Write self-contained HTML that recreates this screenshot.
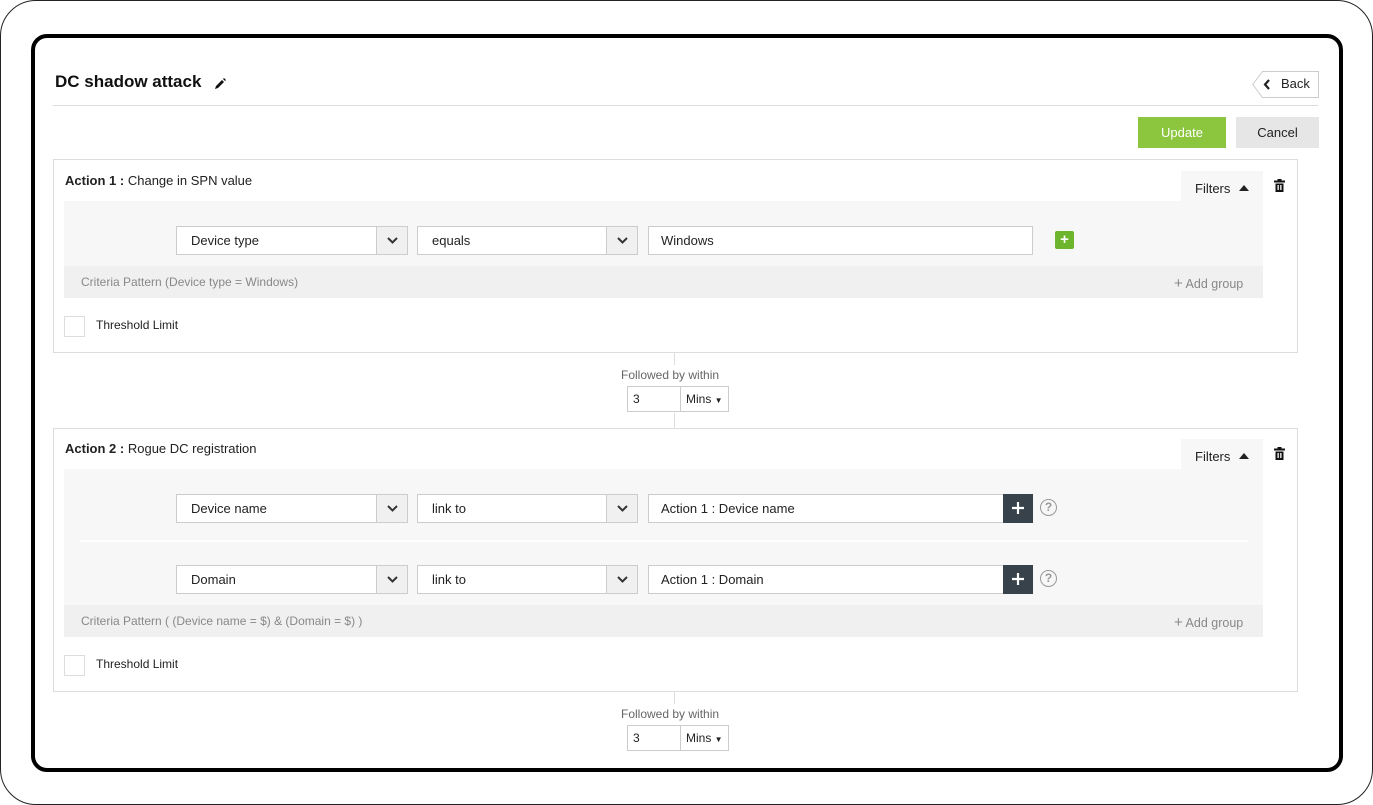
<!DOCTYPE html>
<html><head><style>
*{box-sizing:border-box;margin:0;padding:0}
body{width:1373px;height:805px;background:#fff;font-family:"Liberation Sans",sans-serif;color:#222;position:relative;overflow:hidden;font-size:13px}
.a{position:absolute}
.outer{left:0;top:0;width:1373px;height:805px;border:1px solid #222;border-radius:36px}
.inner{left:31px;top:34px;width:1312px;height:738px;border:4px solid #000;border-radius:16px}
.box{border:1px solid #ddd;background:#fff}
.sel{background:#fff;border:1px solid #ccc;height:29px;font-size:13px;line-height:27px;padding-left:14px;color:#222}
.sel .arr{position:absolute;right:0;top:0;width:31px;height:27px;background:#f0f0f0;border-left:1px solid #ccc}
.sel .arr svg{position:absolute;left:10px;top:10px}
.gray{background:#f7f7f7}
.crit{background:#f0f0f0;color:#888;font-size:12px}
.cb{width:21px;height:21px;border:1px solid #ddd;background:#fff}
.plusd{background:#37424a;width:30px;height:29px;color:#fff}
.help{width:17px;height:17px;border:1.5px solid #999;border-radius:50%;color:#999;font-size:12px;text-align:center;line-height:14px;font-weight:bold}
</style></head><body>
<div class="a outer"></div>
<div class="a inner"></div>

<div class="a" style="left:55px;top:72px;font-size:17px;font-weight:bold;color:#111">DC shadow attack</div>
<svg class="a" style="left:213px;top:77px" width="14" height="14" viewBox="0 0 14 14"><path d="M2 12 L3 9 L9 3 L11 5 L5 11 Z" fill="#111"/><path d="M10 2 L11 1 L13 3 L12 4 Z" fill="#111"/></svg>
<div class="a" style="left:53px;top:105px;width:1265px;height:1px;background:#ddd"></div>

<svg class="a" style="left:1252px;top:71px" width="67" height="27"><path d="M10.5 0.5 H66.5 V26.5 H10.5 L0.8 13.5 Z" fill="#fff" stroke="#ccc"/><path d="M17 9 L13 13.5 L17 18" fill="none" stroke="#222" stroke-width="2.2"/></svg>
<div class="a" style="left:1281px;top:76px;font-size:13px;color:#222">Back</div>

<div class="a" style="left:1138px;top:117px;width:88px;height:31px;background:#8cc63f;color:#fff;font-size:13px;text-align:center;line-height:31px">Update</div>
<div class="a" style="left:1236px;top:117px;width:83px;height:31px;background:#e6e6e6;color:#222;font-size:13px;text-align:center;line-height:31px">Cancel</div>

<!-- Action 1 -->
<div class="a box" style="left:53px;top:159px;width:1245px;height:194px"></div>
<div class="a" style="left:65px;top:173px;font-size:13px"><b>Action 1 :</b> Change in SPN value</div>
<div class="a gray" style="left:1181px;top:171px;width:82px;height:30px"></div>
<div class="a" style="left:1195px;top:181px;font-size:13px">Filters</div>
<svg class="a" style="left:1239px;top:185px" width="10" height="6"><path d="M0 6 L5 0 L10 6Z" fill="#222"/></svg>
<svg class="a" style="left:1274px;top:179px" width="11" height="13"><rect x="0" y="1.5" width="11" height="2" fill="#111"/><rect x="3.5" y="0" width="4" height="2" fill="#111"/><path d="M1.5 4.5 H9.5 V13 H1.5Z" fill="#111"/><rect x="3.5" y="6" width="1.3" height="5" fill="#fff"/><rect x="6.2" y="6" width="1.3" height="5" fill="#fff"/></svg>
<div class="a gray" style="left:64px;top:201px;width:1199px;height:65px"></div>
<div class="a crit" style="left:64px;top:266px;width:1199px;height:32px"></div>
<div class="a" style="left:81px;top:275px;font-size:12px;color:#888">Criteria Pattern (Device type = Windows)</div>
<div class="a" style="left:1174px;top:277px;font-size:12.5px;color:#888"><span style="font-size:15px;line-height:10px">+</span> Add group</div>

<div class="a sel" style="left:176px;top:226px;width:232px">Device type<div class="arr"><svg width="11" height="7"><path d="M1 1 L5.5 5.5 L10 1" fill="none" stroke="#333" stroke-width="2"/></svg></div></div>
<div class="a sel" style="left:417px;top:226px;width:221px">equals<div class="arr"><svg width="11" height="7"><path d="M1 1 L5.5 5.5 L10 1" fill="none" stroke="#333" stroke-width="2"/></svg></div></div>
<div class="a sel" style="left:648px;top:226px;width:385px;padding-left:12px">Windows</div>
<div class="a" style="left:1055px;top:231px;width:19px;height:18px;background:#6cb52d;border-radius:2px;color:#fff;font-weight:bold;text-align:center;line-height:18px;font-size:15px">+</div>

<div class="a cb" style="left:64px;top:316px"></div>
<div class="a" style="left:96px;top:318px;font-size:12px">Threshold Limit</div>

<div class="a" style="left:674px;top:353px;width:1px;height:12px;background:#ddd"></div>
<div class="a" style="left:621px;top:368px;font-size:12px;color:#666">Followed by within</div>
<div class="a" style="left:627px;top:386px;width:102px;height:26px;border:1px solid #ccc;background:#fff"></div>
<div class="a" style="left:680px;top:387px;width:1px;height:24px;background:#ccc"></div>
<div class="a" style="left:633px;top:392px;font-size:12px">3</div>
<div class="a" style="left:686px;top:392px;font-size:12px">Mins <span style="font-size:8px">▼</span></div>
<div class="a" style="left:674px;top:413px;width:1px;height:15px;background:#ddd"></div>

<!-- Action 2 -->
<div class="a box" style="left:53px;top:428px;width:1245px;height:264px"></div>
<div class="a" style="left:65px;top:441px;font-size:13px"><b>Action 2 :</b> Rogue DC registration</div>
<div class="a gray" style="left:1181px;top:439px;width:82px;height:30px"></div>
<div class="a" style="left:1195px;top:449px;font-size:13px">Filters</div>
<svg class="a" style="left:1239px;top:453px" width="10" height="6"><path d="M0 6 L5 0 L10 6Z" fill="#222"/></svg>
<svg class="a" style="left:1274px;top:447px" width="11" height="13"><rect x="0" y="1.5" width="11" height="2" fill="#111"/><rect x="3.5" y="0" width="4" height="2" fill="#111"/><path d="M1.5 4.5 H9.5 V13 H1.5Z" fill="#111"/><rect x="3.5" y="6" width="1.3" height="5" fill="#fff"/><rect x="6.2" y="6" width="1.3" height="5" fill="#fff"/></svg>
<div class="a gray" style="left:64px;top:469px;width:1199px;height:136px"></div>
<div class="a" style="left:80px;top:540px;width:1168px;height:2px;background:#fff"></div>
<div class="a crit" style="left:64px;top:605px;width:1199px;height:32px"></div>
<div class="a" style="left:81px;top:614px;font-size:12px;color:#888">Criteria Pattern ( (Device name = $) &amp; (Domain = $) )</div>
<div class="a" style="left:1174px;top:616px;font-size:12.5px;color:#888"><span style="font-size:15px;line-height:10px">+</span> Add group</div>

<div class="a sel" style="left:176px;top:494px;width:232px">Device name<div class="arr"><svg width="11" height="7"><path d="M1 1 L5.5 5.5 L10 1" fill="none" stroke="#333" stroke-width="2"/></svg></div></div>
<div class="a sel" style="left:417px;top:494px;width:221px">link to<div class="arr"><svg width="11" height="7"><path d="M1 1 L5.5 5.5 L10 1" fill="none" stroke="#333" stroke-width="2"/></svg></div></div>
<div class="a sel" style="left:648px;top:494px;width:385px;padding-left:12px">Action 1 : Device name</div>
<div class="a plusd" style="left:1003px;top:494px"><svg style="position:absolute;left:9px;top:8px" width="12" height="12"><path d="M6 0V12M0 6H12" stroke="#fff" stroke-width="2.2"/></svg></div>
<div class="a help" style="left:1040px;top:499px">?</div>

<div class="a sel" style="left:176px;top:565px;width:232px">Domain<div class="arr"><svg width="11" height="7"><path d="M1 1 L5.5 5.5 L10 1" fill="none" stroke="#333" stroke-width="2"/></svg></div></div>
<div class="a sel" style="left:417px;top:565px;width:221px">link to<div class="arr"><svg width="11" height="7"><path d="M1 1 L5.5 5.5 L10 1" fill="none" stroke="#333" stroke-width="2"/></svg></div></div>
<div class="a sel" style="left:648px;top:565px;width:385px;padding-left:12px">Action 1 : Domain</div>
<div class="a plusd" style="left:1003px;top:565px"><svg style="position:absolute;left:9px;top:8px" width="12" height="12"><path d="M6 0V12M0 6H12" stroke="#fff" stroke-width="2.2"/></svg></div>
<div class="a help" style="left:1040px;top:570px">?</div>

<div class="a cb" style="left:64px;top:655px"></div>
<div class="a" style="left:96px;top:657px;font-size:12px">Threshold Limit</div>

<div class="a" style="left:674px;top:692px;width:1px;height:12px;background:#ddd"></div>
<div class="a" style="left:621px;top:707px;font-size:12px;color:#666">Followed by within</div>
<div class="a" style="left:627px;top:725px;width:102px;height:26px;border:1px solid #ccc;background:#fff"></div>
<div class="a" style="left:680px;top:726px;width:1px;height:24px;background:#ccc"></div>
<div class="a" style="left:633px;top:731px;font-size:12px">3</div>
<div class="a" style="left:686px;top:731px;font-size:12px">Mins <span style="font-size:8px">▼</span></div>
</body></html>
